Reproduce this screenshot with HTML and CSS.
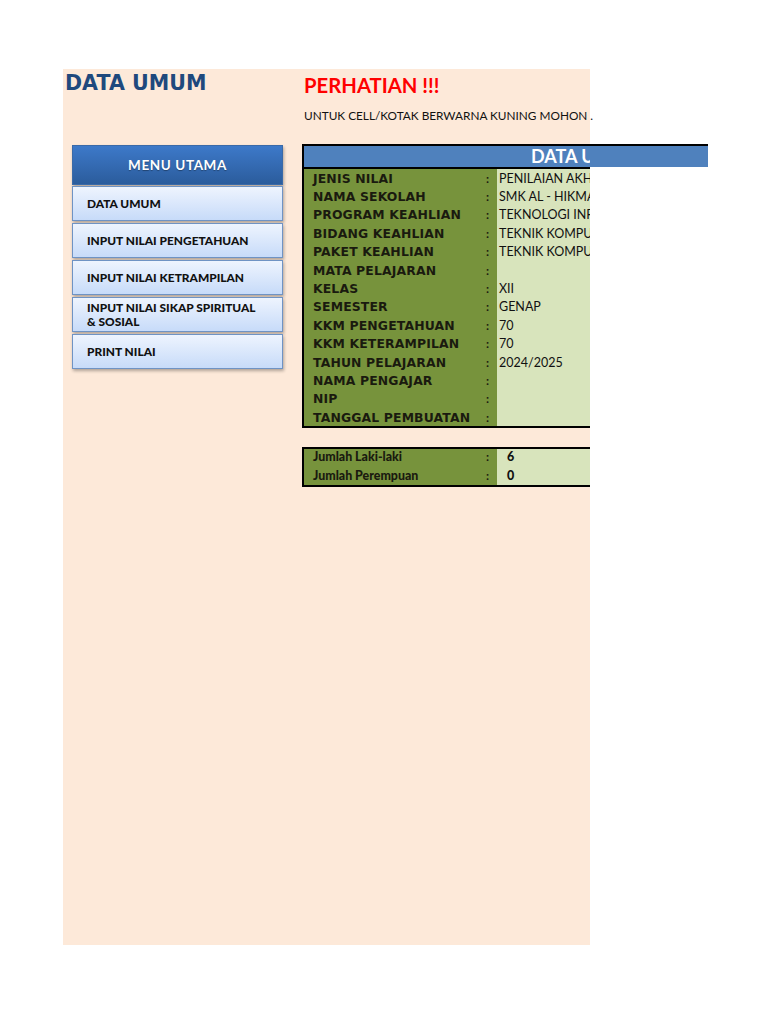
FILE: index.html
```html
<!DOCTYPE html>
<html>
<head>
<meta charset="utf-8">
<link rel="stylesheet" href="styles.css">
</head>
<body>
<div class="sheet">
  <div class="left">
    <h1 class="title">DATA UMUM</h1>
    <nav class="menu">
      <div class="menu-head">MENU UTAMA</div>
      <div class="menu-item">DATA UMUM</div>
      <div class="menu-item">INPUT NILAI PENGETAHUAN</div>
      <div class="menu-item">INPUT NILAI KETRAMPILAN</div>
      <div class="menu-item two">INPUT NILAI SIKAP SPIRITUAL<br>&amp; SOSIAL</div>
      <div class="menu-item">PRINT NILAI</div>
    </nav>
  </div>
  <div class="right">
    <div class="warn">PERHATIAN !!!</div>
    <div class="note">UNTUK CELL/KOTAK BERWARNA KUNING MOHON .</div>
    <div class="banner"><div class="banner-clip"><span>DATA U</span></div></div>
    <div class="clip">
      <div class="table main">
        <div class="row"><span class="lab">JENIS NILAI</span><span class="col">:</span><span class="val">PENILAIAN AKHI</span></div>
        <div class="row"><span class="lab">NAMA SEKOLAH</span><span class="col">:</span><span class="val">SMK AL - HIKMA</span></div>
        <div class="row"><span class="lab">PROGRAM KEAHLIAN</span><span class="col">:</span><span class="val">TEKNOLOGI INF</span></div>
        <div class="row"><span class="lab">BIDANG KEAHLIAN</span><span class="col">:</span><span class="val">TEKNIK KOMPU</span></div>
        <div class="row"><span class="lab">PAKET KEAHLIAN</span><span class="col">:</span><span class="val">TEKNIK KOMPU</span></div>
        <div class="row"><span class="lab">MATA PELAJARAN</span><span class="col">:</span><span class="val"></span></div>
        <div class="row"><span class="lab">KELAS</span><span class="col">:</span><span class="val">XII</span></div>
        <div class="row"><span class="lab">SEMESTER</span><span class="col">:</span><span class="val">GENAP</span></div>
        <div class="row"><span class="lab">KKM PENGETAHUAN</span><span class="col">:</span><span class="val">70</span></div>
        <div class="row"><span class="lab">KKM KETERAMPILAN</span><span class="col">:</span><span class="val">70</span></div>
        <div class="row"><span class="lab">TAHUN PELAJARAN</span><span class="col">:</span><span class="val">2024/2025</span></div>
        <div class="row"><span class="lab">NAMA PENGAJAR</span><span class="col">:</span><span class="val"></span></div>
        <div class="row"><span class="lab">NIP</span><span class="col">:</span><span class="val"></span></div>
        <div class="row"><span class="lab">TANGGAL PEMBUATAN</span><span class="col">:</span><span class="val"></span></div>
      </div>
      <div class="table count">
        <div class="row"><span class="lab">Jumlah Laki-laki</span><span class="col">:</span><span class="val">6</span></div>
        <div class="row"><span class="lab">Jumlah Perempuan</span><span class="col">:</span><span class="val">0</span></div>
      </div>
    </div>
  </div>
</div>
</body>
</html>
```

FILE: styles.css
```css
html, body {
  margin: 0;
  padding: 0;
  background: #ffffff;
}
body {
  padding: 69px 0 0 63px;
  font-family: "Lato", "Liberation Sans", sans-serif;
}
.sheet {
  width: 527px;
  height: 876px;
  background: #fde9d9;
  display: flex;
  position: relative;
}
.left {
  width: 239px;
  flex: none;
}
.title {
  margin: 0;
  padding: 0 0 0 2px;
  font-family: "DejaVu Sans", Verdana, sans-serif;
  font-weight: bold;
  font-size: 20.6px;
  line-height: 28px;
  color: #1f497d;
}
.menu {
  margin: 48px 0 0 9px;
  width: 211px;
  display: flex;
  flex-direction: column;
  gap: 2px;
}
.menu-head {
  height: 40px;
  background: linear-gradient(#3d79c9, #2b5c9c);
  border: 1px solid #3a6aa8;
  box-sizing: border-box;
  color: #ffffff;
  font-weight: bold;
  font-size: 13.5px;
  letter-spacing: 0.6px;
  display: flex;
  align-items: center;
  justify-content: center;
  text-shadow: 0 1px 1px rgba(0,0,0,0.35);
  box-shadow: 1px 2px 3px rgba(0,0,0,0.3);
  margin-bottom: -1px;
}
.menu-item {
  height: 35px;
  box-sizing: border-box;
  background: linear-gradient(#eef4fe, #c7dbf9);
  border: 1px solid #6f93c4;
  color: #111111;
  font-weight: 900;
  font-size: 11.9px;
  padding-left: 14px;
  display: flex;
  align-items: center;
  box-shadow: 1px 2px 3px rgba(0,0,0,0.3);
  line-height: 14px;
}
.menu-item.two {
  align-items: flex-start;
  padding-top: 3px;
}
.right {
  width: 288px;
  flex: none;
}
.warn {
  margin-top: 5px;
  font-weight: bold;
  font-size: 20.3px;
  line-height: 22px;
  color: #ff0000;
  padding-left: 2px;
}
.note {
  margin-top: 13px;
  font-size: 11.8px;
  line-height: 14px;
  padding-left: 2px;
  white-space: nowrap;
  color: #111111;
}
.banner {
  margin-top: 21px;
  width: 406px;
  height: 23px;
  background: #4f81bd;
  border-left: 2px solid #000;
  border-top: 2px solid #000;
  box-sizing: border-box;
}
.banner-clip {
  width: 286px;
  overflow: hidden;
}
.banner-clip span {
  display: block;
  padding-left: 227px;
  color: #ffffff;
  font-weight: bold;
  font-size: 18px;
  line-height: 21px;
  white-space: nowrap;
}
.clip {
  width: 288px;
  overflow: hidden;
}
.table {
  width: 400px;
  border: 2px solid #000;
  border-right: none;
  box-sizing: border-box;
  background: linear-gradient(90deg, #77933c 193px, #d8e4bc 193px);
}
.row {
  display: flex;
  height: 18.4px;
  align-items: center;
  white-space: nowrap;
}
.lab {
  width: 182px;
  padding-left: 9px;
  box-sizing: border-box;
  font-family: "DejaVu Sans", Verdana, sans-serif;
  font-weight: bold;
  font-size: 12.4px;
  color: #1a1a0f;
  letter-spacing: 0.15px;
}
.col {
  width: 11px;
  font-size: 12px;
  color: #1a1a0f;
  font-weight: bold;
}
.val {
  padding-left: 2px;
  font-size: 12.5px;
  color: #111;
}
.count {
  margin-top: 19px;
}
.count .row {
  height: 18px;
  padding-bottom: 3px;
  box-sizing: border-box;
}
.count .row + .row {
  height: 18px;
  padding-bottom: 1px;
}
.count .lab {
  font-family: "Lato", "Liberation Sans", sans-serif;
  font-weight: 900;
  font-size: 12.4px;
  letter-spacing: 0;
}
.count .val {
  padding-left: 10px;
  font-weight: 900;
}
```
